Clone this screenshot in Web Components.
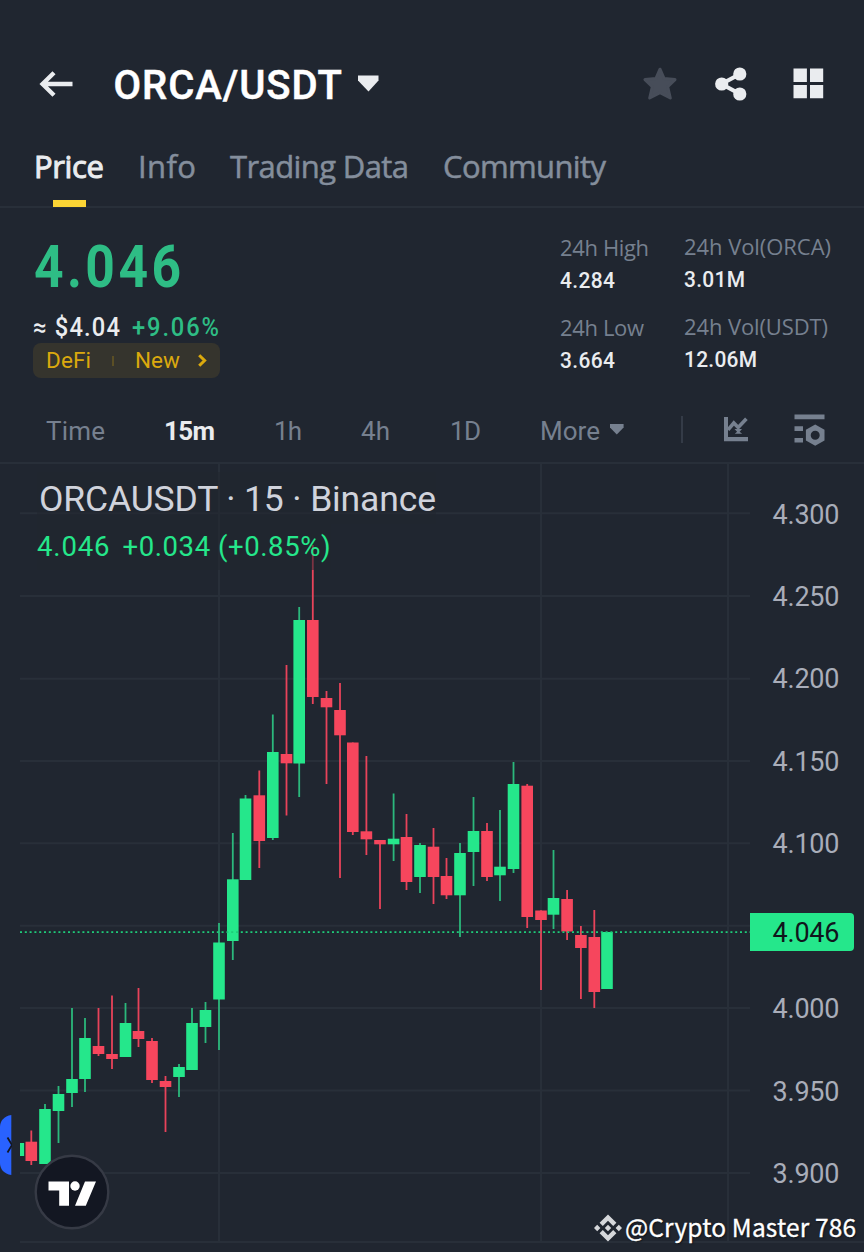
<!DOCTYPE html>
<html lang="en">
<head>
<meta charset="UTF-8">
<title>ORCA/USDT</title>
<style>
    :root {
        --bg: #202630;
        --line: #282f39;
        --text: #eaecef;
        --muted: #848e9c;
        --dim: #76808f;
        --green: #2ebd85;
        --up: #25e78b;
        --down: #f6465d;
        --yellow: #fcd535;
        --ui: "Open Sans", "Noto Sans", sans-serif;
        --num: Roboto, "Liberation Sans", sans-serif;
    }
    body {
        margin: 0;
        width: 864px;
        height: 1252px;
        overflow: hidden;
        background: var(--bg);
        color: var(--text);
        font-family: var(--num);
    }
</style>
</head>
<body>
<trade-page></trade-page>

<script>
// Text that is tracked out (or in) to a given width, optionally condensed by "scale"
class FitLabel extends HTMLElement {
    constructor() {
        super();
        this.attachShadow({ mode: 'open' });
    }

    connectedCallback() {
        this.shadowRoot.innerHTML = `
            <style>
                :host { display: block; line-height: 1; flex: none; }
                span { display: block; width: max-content; white-space: pre; transform-origin: 0 50%; }
            </style>
            <span><slot></slot></span>
        `;
        const span = this.shadowRoot.querySelector('span');
        const width = parseFloat(this.getAttribute('w'));
        const scale = parseFloat(this.getAttribute('scale') || 1);
        const count = this.textContent.length;
        const natural = span.getBoundingClientRect().width;
        span.style.letterSpacing = `${(width / scale - natural) / (count - 1)}px`;
        if (scale !== 1) span.style.transform = `scaleX(${scale})`;
        this.style.width = `${width}px`;
    }
}
customElements.define('fit-label', FitLabel);

class PairHeader extends HTMLElement {
    constructor() {
        super();
        this.attachShadow({ mode: 'open' });
    }

    connectedCallback() {
        this.shadowRoot.innerHTML = `
            <style>
                :host {
                    display: flex;
                    align-items: center;
                    box-sizing: border-box;
                    height: 87px;
                    margin-top: 40px;
                    padding: 0 40px 0 38.5px;
                }
                svg { display: block; flex: none; }
                .title { font-size: 40px; font-weight: 500; color: #fff; margin: 5px 16px 0 41px; -webkit-text-stroke: .5px #fff; }
                .star { margin-left: auto; }
                .share { margin: 0 46px 0 38px; }
            </style>
            <svg width="34" height="26" viewBox="0 0 34 26" fill="none" stroke="#eaecef" stroke-width="4.4">
                <path d="M33.5 13H4M15 1.8 3.6 13 15 24.2"/>
            </svg>
            <fit-label class="title" w="228.5">${this.textContent}</fit-label>
            <svg width="21" height="17" viewBox="0 0 21 17" fill="#eaecef"><path d="M0 .5h20.5v5L10.5 16.5 0 5.5z"/></svg>
            <svg class="star" width="34" height="34" viewBox="0 0 34 34" fill="#474d59" stroke="#474d59" stroke-width="3" stroke-linejoin="round">
                <path d="M17 2.2l4.1 9.3 10.9 1.1-7.3 7.2 2.6 11.2L17 25.6 6.7 31l2.6-11.2L2 12.6l10.9-1.1z"/>
            </svg>
            <svg class="share" width="32" height="34" viewBox="0 0 32 34" fill="#eaecef">
                <path d="M25 7 6.5 17 25 27" fill="none" stroke="#eaecef" stroke-width="4.2"/>
                <circle cx="24.8" cy="7" r="6.6"/><circle cx="6.7" cy="17" r="6.6"/><circle cx="24.8" cy="27" r="6.6"/>
            </svg>
            <svg width="31" height="31" viewBox="0 0 31 31" fill="#eaecef">
                <path d="M.5.5h13.4v13.4H.5zM17 .5h13.2v13.4H17zM.5 17h13.4v13.2H.5zM17 17h13.2v13.2H17z"/>
            </svg>
        `;
    }
}
customElements.define('pair-header', PairHeader);

class PageTabs extends HTMLElement {
    constructor() {
        super();
        this.attachShadow({ mode: 'open' });
    }

    connectedCallback() {
        this.shadowRoot.innerHTML = `
            <style>
                :host {
                    display: flex;
                    gap: 34px;
                    box-sizing: border-box;
                    height: 81px;
                    padding: 24px 0 0 34px;
                    border-bottom: 2px solid var(--line);
                    font: 500 31px/1 var(--ui);
                    color: var(--muted);
                    -webkit-text-stroke: .5px;
                }
                div { display: flex; flex-direction: column; align-items: center; height: 56px; }
                div::after { content: ""; width: 33px; height: 7px; margin-top: auto; }
                .active { color: var(--text); -webkit-text-stroke: 1px; }
                .active::after { background: var(--yellow); }
            </style>
            <div class="active"><fit-label w="70">Price</fit-label></div>
            <div><fit-label w="58">Info</fit-label></div>
            <div><fit-label w="179">Trading Data</fit-label></div>
            <div><fit-label w="163">Community</fit-label></div>
        `;
    }
}
customElements.define('page-tabs', PageTabs);

class StatItem extends HTMLElement {
    constructor() {
        super();
        this.attachShadow({ mode: 'open' });
    }

    connectedCallback() {
        this.shadowRoot.innerHTML = `
            <style>
                :host { display: block; height: 80px; }
                .label { font-family: var(--ui); font-size: 22px; color: var(--dim); line-height: 31px; }
                .value { font-size: 22.5px; font-weight: 500; line-height: 35px; }
            </style>
            <fit-label class="label" w="${this.getAttribute('lw')}">${this.getAttribute('label')}</fit-label>
            <fit-label class="value" w="${this.getAttribute('vw')}" scale="0.93">${this.textContent}</fit-label>
        `;
    }
}
customElements.define('stat-item', StatItem);

class PriceSummary extends HTMLElement {
    constructor() {
        super();
        this.attachShadow({ mode: 'open' });
    }

    connectedCallback() {
        this.shadowRoot.innerHTML = `
            <style>
                :host {
                    display: grid;
                    grid-template-columns: 526px 124px 1fr;
                    height: 189px;
                    padding-left: 34px;
                }
                .last { font-size: 60px; font-weight: 700; color: var(--green); line-height: 62px; margin-top: 28px; }
                .change { display: flex; gap: 12px; font-size: 25.5px; font-weight: 500; margin: 12px 0 0 -1px; }
                .change fit-label { line-height: 34px; }
                .pct { color: var(--green); }
                .tags {
                    display: flex;
                    align-items: center;
                    box-sizing: border-box;
                    width: 187px;
                    height: 35px;
                    margin: -1px 0 0 -1px;
                    padding-left: 13px;
                    border-radius: 8px;
                    background: #35342d;
                    color: #dba90d;
                    font-size: 22.5px;
                }
                .tags i { width: 2px; height: 10px; margin: 0 21px 0 21px; background: #5b4f25; }
                .tags svg { margin-left: 18px; }
                .col { padding-top: 24px; }
                .col + .col { padding-top: 23px; }
            </style>
            <div>
                <fit-label class="last" w="147" scale="0.86">4.046</fit-label>
                <div class="change">
                    <fit-label w="87" scale="0.93">≈ $4.04</fit-label>
                    <fit-label class="pct" w="87" scale="0.93">+9.06%</fit-label>
                </div>
                <div class="tags">
                    <fit-label w="45">DeFi</fit-label><i></i><fit-label w="45">New</fit-label>
                    <svg width="9" height="13" viewBox="0 0 9 13" fill="none" stroke="#dba90d" stroke-width="3"><path d="M1.2 1.2 6.6 6.5 1.2 11.8"/></svg>
                </div>
            </div>
            <div class="col">
                <stat-item label="24h High" lw="89" vw="55">4.284</stat-item>
                <stat-item label="24h Low" lw="84" vw="55">3.664</stat-item>
            </div>
            <div class="col">
                <stat-item label="24h Vol(ORCA)" lw="147" vw="61">3.01M</stat-item>
                <stat-item label="24h Vol(USDT)" lw="144" vw="73">12.06M</stat-item>
            </div>
        `;
    }
}
customElements.define('price-summary', PriceSummary);

class IntervalBar extends HTMLElement {
    constructor() {
        super();
        this.attachShadow({ mode: 'open' });
    }

    connectedCallback() {
        this.shadowRoot.innerHTML = `
            <style>
                :host {
                    display: grid;
                    grid-template-columns: 118px 110px 87px 89px 90px 70px 71px 43px 70px 40px;
                    align-items: center;
                    box-sizing: border-box;
                    height: 67px;
                    padding-left: 46px;
                    border-bottom: 2px solid var(--line);
                    font-size: 26px;
                    color: var(--dim);
                }
                fit-label { margin-top: 3px; }
                .active { font-weight: 700; color: var(--text); }
                i { width: 2px; height: 27px; background: #343b47; }
                svg { display: block; }
            </style>
            <fit-label w="59">Time</fit-label>
            <fit-label class="active" w="51">15m</fit-label>
            <fit-label w="28">1h</fit-label>
            <fit-label w="29">4h</fit-label>
            <fit-label w="31">1D</fit-label>
            <fit-label w="60">More</fit-label>
            <svg width="14" height="11" viewBox="0 0 14 11" fill="#76808f"><path d="M0 0h13.6v3.5L6.8 10.5 0 3.5z"/></svg>
            <i></i>
            <svg width="25" height="25" viewBox="0 0 25 25" fill="#76808f">
                <path d="M0 0h4v20h20v4.3H0z"/>
                <path d="M4 12.8 9.8 6l4.4 4.5 8.2-8.7" fill="none" stroke="#76808f" stroke-width="3.6"/>
                <path d="M10.5 12h7.5l-2.4 2.7 2.6 2.1H10.8l2.3-2.1z"/>
            </svg>
            <svg width="32" height="32" viewBox="0 0 32 32" fill="#76808f">
                <path d="M.5.5h30v4.7H.5zM.5 12.3H9v4.6H.5zM.5 24H9v4.6H.5z"/>
                <path fill-rule="evenodd" d="M21.2 10.5 30.5 15.8v10.8l-9.3 5.2-9.3-5.2V15.8zM21.2 16.7a4.5 4.5 0 1 0 0 9 4.5 4.5 0 0 0 0-9z"/>
            </svg>
        `;
    }
}
customElements.define('interval-bar', IntervalBar);

// [x, high, body top, body bottom, low, direction]
const CANDLES = [
    [18.3, 1143, 1143, 1156, 1156, 'u'], [31.3, 1130.5, 1141.7, 1161, 1165, 'd'], [45, 1104, 1109, 1164, 1164, 'u'],
    [58.5, 1086, 1094, 1111, 1143, 'u'], [72, 1008, 1079, 1093, 1107, 'u'], [85, 1018, 1038, 1079, 1092, 'u'],
    [98.5, 1008, 1046, 1054, 1056, 'd'], [112, 995.5, 1054, 1059, 1069, 'd'], [125.5, 1003, 1023, 1057, 1057, 'u'],
    [138.5, 988, 1031, 1039, 1047, 'd'], [152, 1038, 1041, 1080, 1083, 'd'], [165.5, 1076, 1081, 1087, 1132, 'd'],
    [179, 1064, 1067, 1077, 1097, 'u'], [192, 1008, 1023, 1070, 1070, 'u'], [205.5, 1002, 1010, 1027, 1043, 'u'],
    [219, 923, 942.5, 999.5, 1050, 'u'], [232.8, 833, 879.3, 941, 960, 'u'], [245.5, 795, 798.5, 880, 880, 'u'],
    [259.3, 770.5, 795.3, 841, 868, 'd'], [272.8, 714.5, 752, 838, 840, 'u'], [286.5, 665, 754, 763.3, 815.5, 'd'],
    [299.2, 607, 620, 763.5, 797, 'u'], [312.8, 545, 620, 697, 704, 'd'], [326.5, 691, 698, 707.3, 784, 'd'],
    [340, 683, 710, 735.3, 878, 'd'], [352.8, 742.5, 742.5, 832, 835, 'd'], [366.4, 756, 831.3, 839.3, 855, 'd'],
    [380, 840, 840, 844.3, 909, 'd'], [393.6, 793.5, 838.7, 844.3, 861, 'u'], [406.5, 814, 837, 882, 890, 'd'],
    [420, 843, 845, 877, 893, 'u'], [433.5, 828, 846.7, 877, 904, 'd'], [446.5, 858, 876, 895.3, 899, 'd'],
    [460, 843, 853, 895.3, 937, 'u'], [473.5, 797, 831, 852, 886, 'u'], [487, 823, 831, 877, 881, 'd'],
    [500, 810, 866.7, 875.3, 901, 'u'], [513.5, 762, 784, 869, 873, 'u'], [527.2, 784, 785.7, 917, 928, 'd'],
    [541, 910.3, 910.5, 920, 990, 'd'], [553.5, 850, 898, 914.7, 929, 'u'], [567.1, 890, 899, 931.5, 940, 'd'],
    [580.9, 926, 935, 948, 999, 'd'], [594.3, 910, 937, 992, 1008, 'd'], [607, 932, 932, 989, 989, 'u']
];

class CandleChart extends HTMLElement {
    constructor() {
        super();
        this.attachShadow({ mode: 'open' });
    }

    connectedCallback() {
        const rows = [513.3, 596, 678.7, 761, 843.2, 925.7, 1008, 1090.5, 1173];
        const labels = ['4.300', '4.250', '4.200', '4.150', '4.100', '', '4.000', '3.950', '3.900'];
        this.shadowRoot.innerHTML = `
            <style>
                :host { display: flow-root; position: relative; height: 788px; overflow: hidden; }
                .plot { display: block; position: absolute; left: 0; top: 0; }
                .grid { stroke: var(--line); stroke-width: 2; }
                .u { fill: var(--up); }
                .d { fill: var(--down); }
                .wick.u { fill: #2bb87c; }
                .wick.d { fill: #e8435a; }
                .legend { position: absolute; left: 37px; top: 8px; }
                .legend > div { width: max-content; background: rgba(32, 38, 48, .55); }
                .name { height: 52px; padding-left: 2px; font-size: 35.5px; color: #d0d3dc; }
                .name fit-label { line-height: 54px; }
                .quote { display: flex; gap: 13px; height: 46px; font-size: 27.5px; color: var(--up); }
                .quote fit-label { line-height: 45px; }
                .axis { display: flex; flex-direction: column; margin: 9.5px 0 0 772.5px; font-size: 27px; color: #a9adb9; }
                .axis div { height: 82.45px; }
                .axis fit-label { line-height: 82.45px; }
                .tag {
                    position: absolute;
                    left: 750px;
                    top: 449px;
                    width: 81px;
                    height: 38px;
                    padding-left: 22.5px;
                    border-radius: 0 4px 4px 0;
                    background: var(--up);
                    color: #10151c;
                    font-size: 27px;
                }
                .tag fit-label { line-height: 41px; }
                .handle { position: absolute; left: 0; top: 651px; }
                .logo { position: absolute; left: 34px; top: 690px; }
                .mark { position: absolute; right: 8px; top: 746px; display: flex; align-items: center; gap: 3px; }
                .mark fit-label {
                    font-family: "Noto Sans CJK SC", "Noto Sans", sans-serif;
                    font-size: 24.5px;
                    line-height: 34px;
                    margin-bottom: 2px;
                    color: #fff;
                    -webkit-text-stroke: .3px;
                    text-shadow: 1px 1px 2px rgba(0, 0, 0, .6);
                }
            </style>
            <svg class="plot" width="864" height="788" viewBox="0 464 864 788">
                <g class="grid">
                    ${rows.map(y => `<path d="M20 ${y}H750"/>`).join('')}
                    <path d="M219 464V1242M541 464V1242M728 464V1242M20 1242H864"/>
                </g>
                <clipPath id="pane"><rect x="20" y="464" width="730" height="778"/></clipPath>
                <g clip-path="url(#pane)">${CANDLES.map(c => this.candle(c)).join('')}</g>
                <path d="M20 932.2H750" stroke="#1ecb79" stroke-width="1.8" stroke-dasharray="2 2.8"/>
            </svg>
            <div class="legend">
                <div class="name"><fit-label w="397">ORCAUSDT · 15 · Binance</fit-label></div>
                <div class="quote"><fit-label w="72.5">4.046</fit-label><fit-label w="208">+0.034 (+0.85%)</fit-label></div>
            </div>
            <div class="axis">${labels.map(t => `<div>${t && `<fit-label w="67">${t}</fit-label>`}</div>`).join('')}</div>
            <div class="tag"><fit-label w="67">4.046</fit-label></div>
            <svg class="handle" width="12" height="60" viewBox="0 0 12 60">
                <path d="M11.3 0C4 1 0 6 0 12v36c0 6 4 11 11.3 12z" fill="#2962ff"/>
                <path d="M7.5 22.5 12 30l-4.5 7.5" fill="none" stroke="#131722" stroke-width="1.8"/>
            </svg>
            <svg class="logo" width="76" height="76" viewBox="0 0 76 76">
                <circle cx="38" cy="38" r="36.3" fill="#131722" stroke="#363a45" stroke-width="2.4"/>
                <path d="M14.5 27.5h20.5v24.2h-9.8V36.5H14.5zM51 27.5h11L51.8 51.7H41z" fill="#fff"/>
                <circle cx="41" cy="32" r="4.7" fill="#fff"/>
            </svg>
            <div class="mark">
                <svg width="28" height="28" viewBox="0 0 28 28" fill="#d5d7da">
                    <path d="M14 .4l8.4 8.4-3.2 3.2L14 6.8 8.8 12 5.6 8.8zM14 27.6l8.4-8.4-3.2-3.2-5.2 5.2L8.8 16l-3.2 3.2zM14 10.8l3.2 3.2-3.2 3.2-3.2-3.2zM3.2 10.8 6.4 14l-3.2 3.2L0 14zM24.8 10.8 28 14l-3.2 3.2-3.2-3.2z"/>
                </svg>
                <fit-label w="231">@Crypto Master 786</fit-label>
            </div>
        `;
    }

    candle([x, high, top, bottom, low, dir]) {
        return `<rect class="wick ${dir}" x="${x - 0.9}" y="${high}" width="1.8" height="${low - high}"/>
            <rect class="${dir}" x="${x - 5.8}" y="${top}" width="11.6" height="${bottom - top}"/>`;
    }
}
customElements.define('candle-chart', CandleChart);

class TradePage extends HTMLElement {
    constructor() {
        super();
        this.attachShadow({ mode: 'open' });
    }

    connectedCallback() {
        this.shadowRoot.innerHTML = `
            <style>
                :host { display: flow-root; height: 1252px; }
            </style>
            <pair-header>ORCA/USDT</pair-header>
            <page-tabs></page-tabs>
            <price-summary></price-summary>
            <interval-bar></interval-bar>
            <candle-chart></candle-chart>
        `;
    }
}
customElements.define('trade-page', TradePage);
</script>
</body>
</html>
